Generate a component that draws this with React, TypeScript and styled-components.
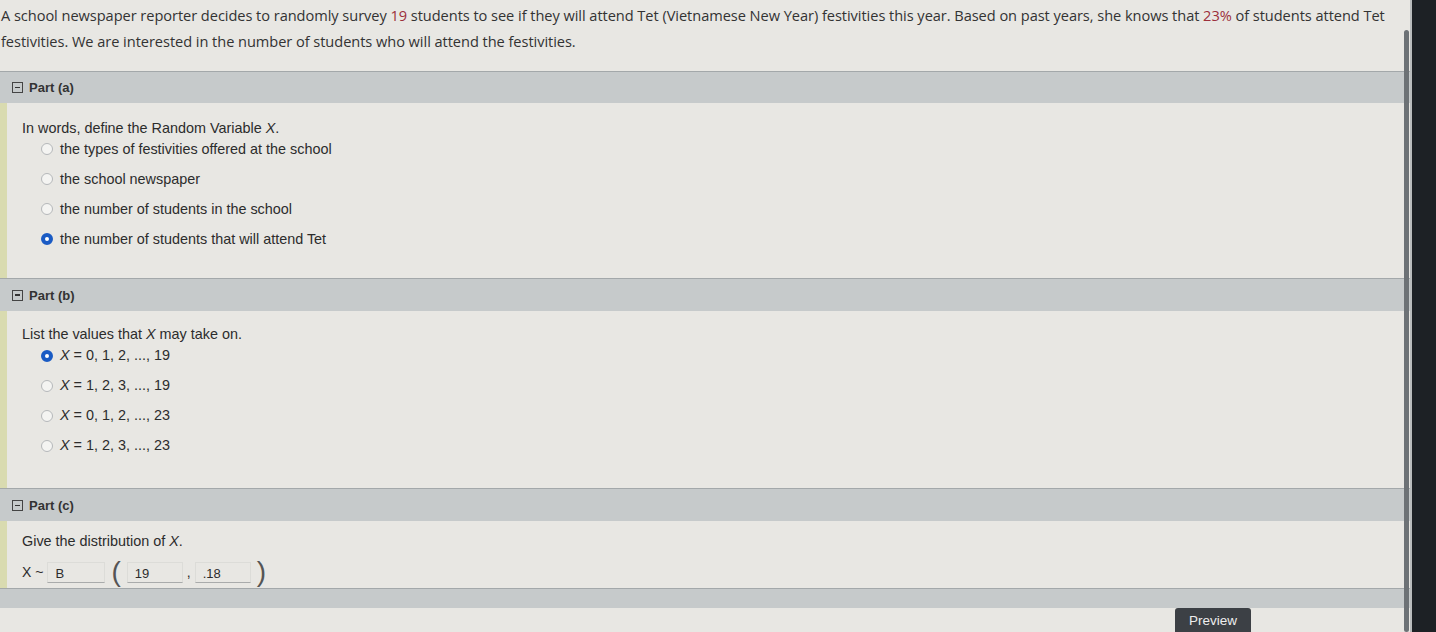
import styled, { createGlobalStyle } from 'styled-components'

const GlobalStyle = createGlobalStyle`
  html, body {
    margin: 0;
    padding: 0;
    background: #1d2125;
  }
  body {
    font-family: 'Liberation Sans', Arial, sans-serif;
    color: #2c2c2c;
  }
`

const Screen = styled.div`
  display: flex;
  width: 1436px;
  height: 632px;
  overflow: hidden;
`

const Page = styled.div`
  position: relative;
  flex: 1;
  background: #e8e7e3;
  display: flex;
  flex-direction: column;
`

const Bezel = styled.div`
  width: 24px;
  background: #1d2125;
  border-left: 2px solid #b9bcbd;
`

const ScrollThumb = styled.div`
  position: absolute;
  right: 1px;
  top: 30px;
  bottom: 0;
  width: 5px;
  border-radius: 3px;
  background: #6d7276;
`

const Intro = styled.div`
  font-family: 'Open Sans', sans-serif;
  font-size: 14.6px;
  letter-spacing: -0.05px;
  line-height: 26px;
  padding: 2px 8px 0 1px;
  height: 73px;
  box-sizing: border-box;
  color: #333;
`

const Red = styled.span`
  color: #9c2f3b;
`

const PartHeader = styled.div<{ $h: number }>`
  display: flex;
  align-items: center;
  gap: 6px;
  height: ${(p) => p.$h}px;
  padding-left: 12px;
  background: #c6cacb;
  border-top: 1px solid #a3a8aa;
  font-size: 13px;
  font-weight: bold;
  color: #333;
`

const Toggle = styled.span`
  width: 9px;
  height: 9px;
  border: 1px solid #444;
  display: flex;
  align-items: center;
  justify-content: center;
  &::after {
    content: '';
    width: 5px;
    height: 1.5px;
    background: #333;
  }
`

const PartBody = styled.div<{ $h: number; $top: number }>`
  height: ${(p) => p.$h}px;
  padding: ${(p) => p.$top}px 0 0 15px;
  border-left: 7px solid #d9dbb0;
  box-sizing: border-box;
`

const Question = styled.div`
  font-size: 14.4px;
  line-height: 17px;
  margin-bottom: 4px;
`

const Options = styled.div`
  display: flex;
  flex-direction: column;
  gap: 13px;
  padding-left: 19px;
`

const Option = styled.label`
  display: flex;
  align-items: center;
  gap: 7px;
  font-size: 14.4px;
  line-height: 17px;
`

const Radio = styled.span<{ $on?: boolean }>`
  width: 12px;
  height: 12px;
  border-radius: 50%;
  box-sizing: border-box;
  border: ${(p) => (p.$on ? '4px solid #1a5bc4' : '1px solid #b5b8ba')};
  background: ${(p) => (p.$on ? '#fff' : '#f4f4f2')};
`

const Ital = styled.i`
  font-style: italic;
`

const DistRow = styled.div`
  display: flex;
  align-items: center;
  gap: 4px;
  margin-top: 8px;
  font-size: 14px;
`

const Field = styled.span<{ $w: number }>`
  display: inline-block;
  width: ${(p) => p.$w}px;
  height: 21px;
  line-height: 21px;
  padding-left: 7px;
  box-sizing: border-box;
  border: 1px solid #dcdcd8;
  border-bottom: 1px solid #a9abab;
  font-size: 13px;
`

const Paren = styled.span`
  font-size: 28px;
  font-weight: 300;
  color: #555;
  line-height: 28px;
  margin: 0 2px;
`

const BottomBar = styled.div`
  height: 20px;
  background: #c6cacb;
  border-top: 1px solid #a3a8aa;
`

const Footer = styled.div`
  flex: 1;
  display: flex;
  justify-content: flex-end;
  align-items: flex-end;
  padding-right: 159px;
`

const PreviewButton = styled.button`
  width: 76px;
  height: 24px;
  border: none;
  border-radius: 3px 3px 0 0;
  background: #3c4045;
  color: #eee;
  font-family: 'Liberation Sans', Arial, sans-serif;
  font-size: 13.5px;
`

const App = () => {
  return (
    <>
      <GlobalStyle />
      <Screen>
        <Page>
          <ScrollThumb />
          <Intro>
            A school newspaper reporter decides to randomly survey <Red>19</Red> students to see if
            they will attend Tet (Vietnamese New Year) festivities this year. Based on past years,
            she knows that <Red>23%</Red> of students attend Tet festivities. We are interested in
            the number of students who will attend the festivities.
          </Intro>

          <PartHeader $h={32}>
            <Toggle />
            Part (a)
          </PartHeader>
          <PartBody $h={180} $top={17}>
            <Question>
              In words, define the Random Variable <Ital>X</Ital>.
            </Question>
            <Options>
              <Option>
                <Radio />
                the types of festivities offered at the school
              </Option>
              <Option>
                <Radio />
                the school newspaper
              </Option>
              <Option>
                <Radio />
                the number of students in the school
              </Option>
              <Option>
                <Radio $on />
                the number of students that will attend Tet
              </Option>
            </Options>
          </PartBody>

          <PartHeader $h={33}>
            <Toggle />
            Part (b)
          </PartHeader>
          <PartBody $h={182} $top={15}>
            <Question>
              List the values that <Ital>X</Ital> may take on.
            </Question>
            <Options>
              <Option>
                <Radio $on />
                <span>
                  <Ital>X</Ital> = 0, 1, 2, ..., 19
                </span>
              </Option>
              <Option>
                <Radio />
                <span>
                  <Ital>X</Ital> = 1, 2, 3, ..., 19
                </span>
              </Option>
              <Option>
                <Radio />
                <span>
                  <Ital>X</Ital> = 0, 1, 2, ..., 23
                </span>
              </Option>
              <Option>
                <Radio />
                <span>
                  <Ital>X</Ital> = 1, 2, 3, ..., 23
                </span>
              </Option>
            </Options>
          </PartBody>

          <PartHeader $h={33}>
            <Toggle />
            Part (c)
          </PartHeader>
          <PartBody $h={68} $top={12}>
            <Question>
              Give the distribution of <Ital>X</Ital>.
            </Question>
            <DistRow>
              <span>X ~</span>
              <Field $w={58}>B</Field>
              <Paren>(</Paren>
              <Field $w={56}>19</Field>
              <span>,</span>
              <Field $w={56}>.18</Field>
              <Paren>)</Paren>
            </DistRow>
          </PartBody>
          <BottomBar />
          <Footer>
            <PreviewButton>Preview</PreviewButton>
          </Footer>
        </Page>
        <Bezel />
      </Screen>
    </>
  )
}

export default App
